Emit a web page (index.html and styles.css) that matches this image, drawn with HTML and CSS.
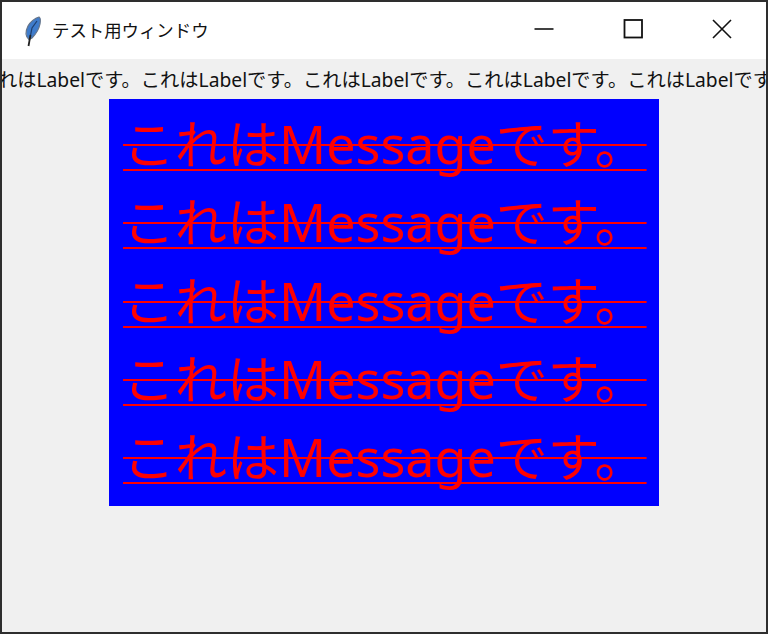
FILE: index.html
```html
<!DOCTYPE html>
<html lang="ja">
<head>
    <meta charset="UTF-8">
    <title>テスト用ウィンドウ</title>
    <link rel="stylesheet" href="styles.css">
</head>
<body>
    <div class="window">
        <div class="titlebar">
            <svg class="app-icon" width="20" height="32" viewBox="0 0 20 32">
                <path d="M17 2 C19 3 18.5 6 18 9 C17 14 14 19 10 23 L7 24.5 C4 22 3 17 6 11 C8 7 13 3 17 2 Z" fill="#3f7ccb" stroke="#66758a" stroke-width="1.2"/>
                <path d="M15 6 L10 13 L8 23" fill="none" stroke="#1f3f6e" stroke-width="1.2"/>
                <path d="M8.5 20 L6.5 31" fill="none" stroke="#222" stroke-width="1.8"/>
            </svg>
            <span class="title">テスト用ウィンドウ</span>
            <div class="controls">
                <div class="control">
                    <svg width="20" height="20" viewBox="0 0 20 20"><path d="M0.5 10 H19.5" stroke="#111" stroke-width="1.6"/></svg>
                </div>
                <div class="control">
                    <svg width="20" height="20" viewBox="0 0 20 20"><rect x="1.5" y="1" width="17.5" height="17.5" fill="none" stroke="#111" stroke-width="1.8"/></svg>
                </div>
                <div class="control">
                    <svg width="20" height="20" viewBox="0 0 20 20"><path d="M1 1 L19 19 M19 1 L1 19" stroke="#111" stroke-width="1.6"/></svg>
                </div>
            </div>
        </div>
        <div class="content">
            <div class="label">これはLabelです。これはLabelです。これはLabelです。これはLabelです。これはLabelです。</div>
            <div class="message">
                <div class="message-line"><span>これはMessageです。</span></div>
                <div class="message-line"><span>これはMessageです。</span></div>
                <div class="message-line"><span>これはMessageです。</span></div>
                <div class="message-line"><span>これはMessageです。</span></div>
                <div class="message-line"><span>これはMessageです。</span></div>
            </div>
        </div>
    </div>
</body>
</html>
```

FILE: styles.css
```css
* {
    margin: 0;
    padding: 0;
    box-sizing: border-box;
}

html, body {
    width: 768px;
    height: 634px;
    overflow: hidden;
}

body {
    font-family: "Noto Sans", "Noto Sans CJK JP", sans-serif;
}

.window {
    width: 768px;
    height: 634px;
    border: 2px solid #2e2e2e;
    display: flex;
    flex-direction: column;
    background: #f0f0f0;
}

.titlebar {
    height: 57px;
    background: #fff;
    display: flex;
    align-items: center;
    padding-left: 20px;
    flex-shrink: 0;
}

.app-icon {
    margin-right: 10px;
}

.title {
    font-size: 17.4px;
    color: #111;
    margin-bottom: 2px;
}

.controls {
    margin-left: auto;
    margin-bottom: 3px;
    display: flex;
}

.control {
    width: 89px;
    display: flex;
    justify-content: center;
}

.content {
    flex: 1;
    display: flex;
    flex-direction: column;
    align-items: center;
    overflow: hidden;
}

.label {
    height: 40px;
    line-height: 42px;
    font-size: 19.25px;
    color: #111;
    white-space: nowrap;
    flex-shrink: 0;
}

.message {
    width: 550px;
    height: 407px;
    background: #00f;
    color: #f00;
    padding: 6px 14px 0;
    flex-shrink: 0;
}

.message-line {
    height: 78.25px;
    line-height: 78px;
    font-size: 52px;
    white-space: nowrap;
}

.message-line span {
    text-decoration: underline line-through;
    text-decoration-thickness: 2px;
    text-decoration-skip-ink: none;
    text-underline-offset: 5px;
}
```
